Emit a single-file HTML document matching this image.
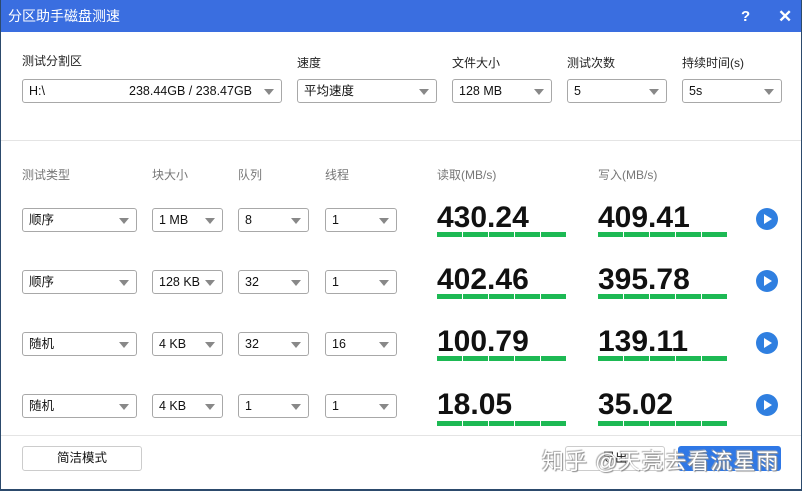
<!DOCTYPE html>
<html><head><meta charset="utf-8"><style>
*{margin:0;padding:0;box-sizing:border-box}
body{width:802px;height:491px;overflow:hidden;background:#fff;font-family:"Liberation Sans","Noto Sans CJK SC",sans-serif;position:relative}
.frame{position:absolute;left:0;top:0;width:802px;height:491px;border:1px solid #2c4a6c;border-top:none;border-bottom:2px solid #2c4a6c}
.title{position:absolute;left:0;top:0;width:802px;height:32px;background:#3a6ee0;color:#fff;font-size:14px;line-height:32px;padding-left:8px}
.q{position:absolute;left:741px;top:0;color:#fff;font-size:15px;font-weight:bold;line-height:34px}
.x{position:absolute;left:778px;top:0;color:#fff;font-size:17px;font-weight:bold;line-height:33px}
.lbl{position:absolute;font-size:12px;color:#222}
.lbl2{position:absolute;font-size:12px;color:#777}
.sel{position:absolute;height:24px;border:1px solid #a8a8a8;border-radius:3px;font-size:12.5px;color:#111;line-height:22px;padding-left:6px;background:#fff}
.sel:after{content:"";position:absolute;right:7px;top:9px;border-left:5px solid transparent;border-right:5px solid transparent;border-top:6px solid #888}
.sep{position:absolute;left:1px;width:800px;height:1px;background:#e4e4e4}
.num{position:absolute;font-size:30px;font-weight:bold;color:#111;line-height:30px}
.bar{position:absolute;width:130px;height:5px;background:repeating-linear-gradient(90deg,#1db954 0 25px,#fff 25px 26px)}
.play{position:absolute;width:22px;height:22px;border-radius:50%;background:#2f7fe0}
.play:after{content:"";position:absolute;left:8px;top:6px;border-top:5px solid transparent;border-bottom:5px solid transparent;border-left:8px solid #fff}
.btn{position:absolute;height:25px;border:1px solid #ccc;border-radius:3px;font-size:12.5px;text-align:center;line-height:23px;background:#fff;color:#111}
</style></head><body>
<div class="title">分区助手磁盘测速</div>
<div class="q">?</div><div class="x">✕</div>

<div class="lbl" style="left:22px;top:52px">测试分割区</div>
<div class="lbl" style="left:297px;top:54px">速度</div>
<div class="lbl" style="left:452px;top:54px">文件大小</div>
<div class="lbl" style="left:567px;top:54px">测试次数</div>
<div class="lbl" style="left:682px;top:54px">持续时间(s)</div>
<div class="sel" style="left:22px;top:79px;width:260px">H:\<span style="position:absolute;left:106px">238.44GB / 238.47GB</span></div>
<div class="sel" style="left:297px;top:79px;width:140px">平均速度</div>
<div class="sel" style="left:452px;top:79px;width:100px">128 MB</div>
<div class="sel" style="left:567px;top:79px;width:100px">5</div>
<div class="sel" style="left:682px;top:79px;width:100px">5s</div>
<div class="sep" style="top:140px"></div>

<div class="lbl2" style="left:22px;top:166px">测试类型</div>
<div class="lbl2" style="left:152px;top:166px">块大小</div>
<div class="lbl2" style="left:238px;top:166px">队列</div>
<div class="lbl2" style="left:325px;top:166px">线程</div>
<div class="lbl2" style="left:437px;top:166px">读取(MB/s)</div>
<div class="lbl2" style="left:598px;top:166px">写入(MB/s)</div>

<div class="sel" style="left:22px;top:208px;width:115px">顺序</div>
<div class="sel" style="left:152px;top:208px;width:71px">1 MB</div>
<div class="sel" style="left:238px;top:208px;width:71px">8</div>
<div class="sel" style="left:325px;top:208px;width:72px">1</div>
<div class="num" style="left:437px;top:203px">430.24</div>
<div class="num" style="left:598px;top:203px">409.41</div>
<div class="bar" style="left:437px;top:232px"></div><div class="bar" style="left:598px;top:232px"></div>
<div class="play" style="left:756px;top:208px"></div>

<div class="sel" style="left:22px;top:270px;width:115px">顺序</div>
<div class="sel" style="left:152px;top:270px;width:71px">128 KB</div>
<div class="sel" style="left:238px;top:270px;width:71px">32</div>
<div class="sel" style="left:325px;top:270px;width:72px">1</div>
<div class="num" style="left:437px;top:265px">402.46</div>
<div class="num" style="left:598px;top:265px">395.78</div>
<div class="bar" style="left:437px;top:294px"></div><div class="bar" style="left:598px;top:294px"></div>
<div class="play" style="left:756px;top:270px"></div>

<div class="sel" style="left:22px;top:332px;width:115px">随机</div>
<div class="sel" style="left:152px;top:332px;width:71px">4 KB</div>
<div class="sel" style="left:238px;top:332px;width:71px">32</div>
<div class="sel" style="left:325px;top:332px;width:72px">16</div>
<div class="num" style="left:437px;top:327px">100.79</div>
<div class="num" style="left:598px;top:327px">139.11</div>
<div class="bar" style="left:437px;top:356px"></div><div class="bar" style="left:598px;top:356px"></div>
<div class="play" style="left:756px;top:332px"></div>

<div class="sel" style="left:22px;top:394px;width:115px">随机</div>
<div class="sel" style="left:152px;top:394px;width:71px">4 KB</div>
<div class="sel" style="left:238px;top:394px;width:71px">1</div>
<div class="sel" style="left:325px;top:394px;width:72px">1</div>
<div class="num" style="left:437px;top:390px">18.05</div>
<div class="num" style="left:598px;top:390px">35.02</div>
<div class="bar" style="left:437px;top:421px"></div><div class="bar" style="left:598px;top:421px"></div>
<div class="play" style="left:756px;top:394px"></div>

<div class="sep" style="top:435px"></div>
<div class="btn" style="left:22px;top:446px;width:120px">简洁模式</div>
<div class="btn" style="left:565px;top:446px;width:100px">导出</div>
<div class="btn" style="left:678px;top:446px;width:103px;background:#2f78e6;border-color:#2f78e6;color:#fff"></div>
<div style="position:absolute;left:542px;top:444px;font-size:22px;color:#fff;text-shadow:1px 1px 1px #888,-1px -1px 1px #aaa;letter-spacing:1px;white-space:nowrap">知乎 @天亮去看流星雨</div>
<div class="frame"></div>
</body></html>
